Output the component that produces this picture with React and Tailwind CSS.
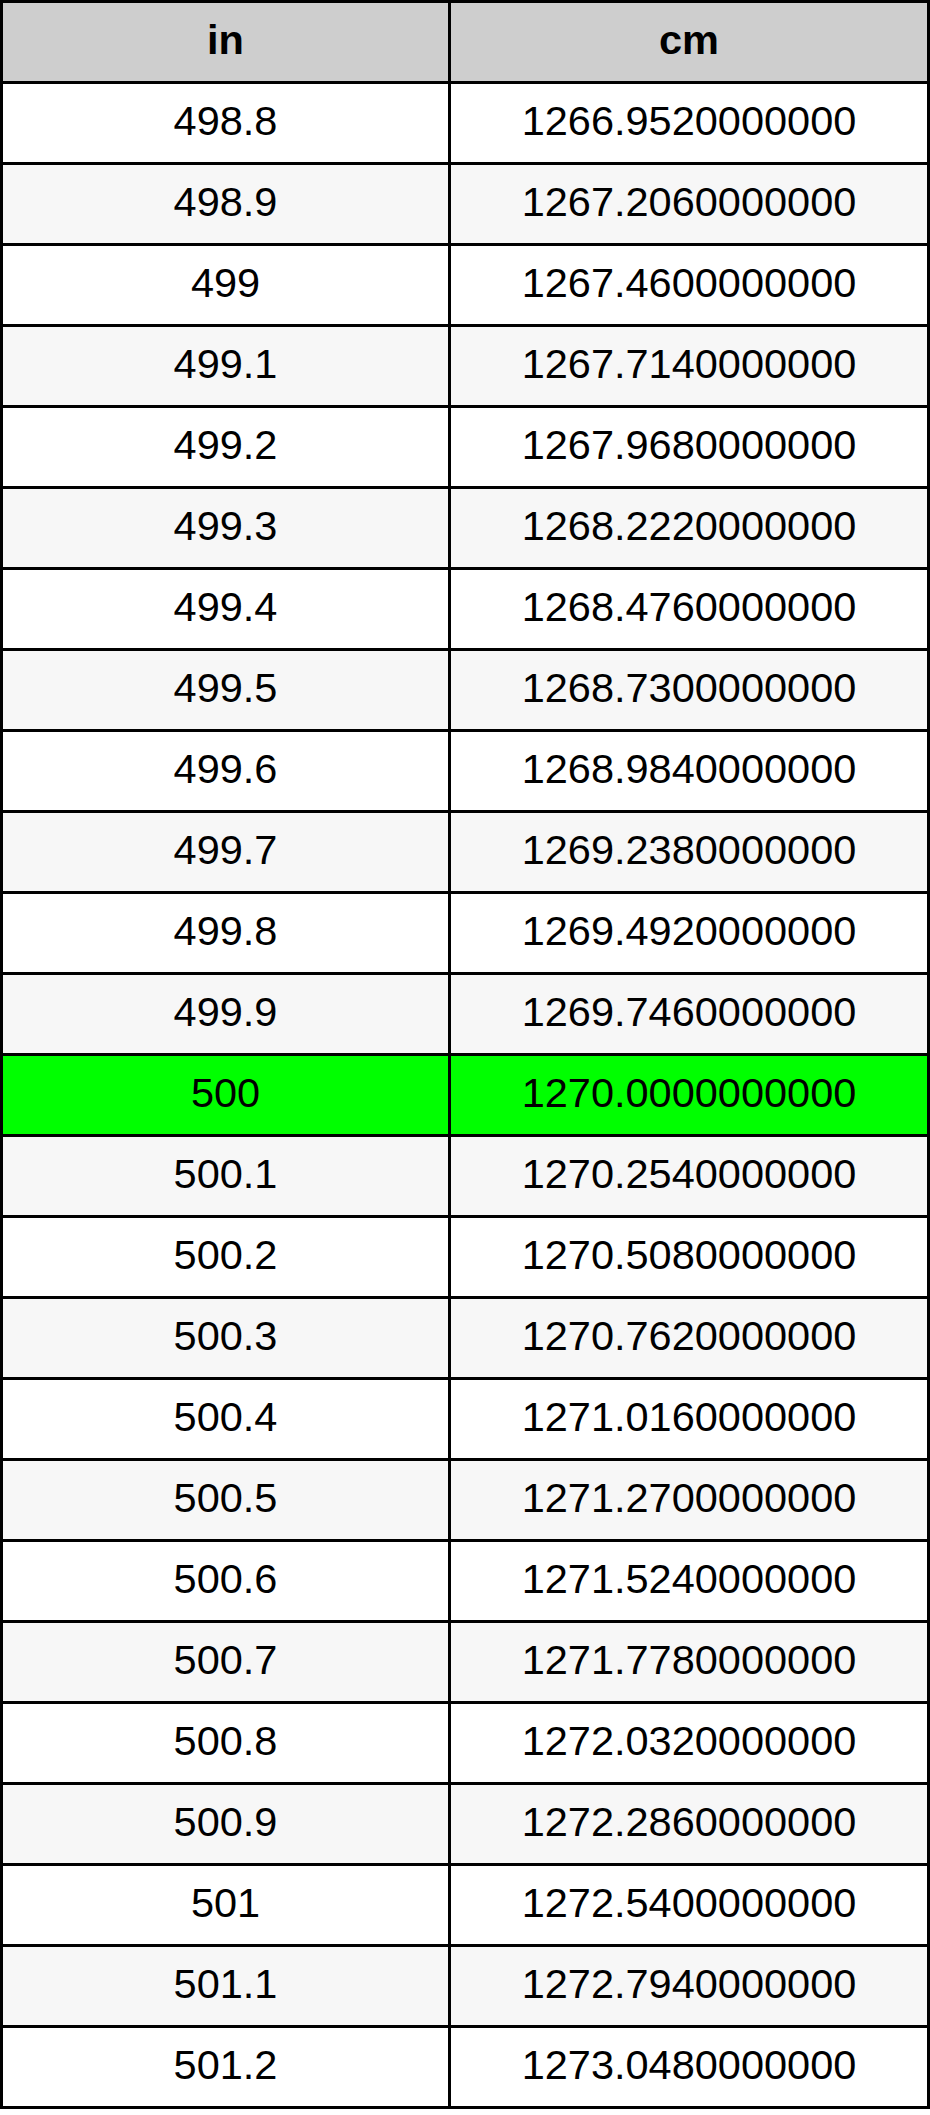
import React from "react";

const rows = [
  ["498.8", "1266.9520000000"],
  ["498.9", "1267.2060000000"],
  ["499", "1267.4600000000"],
  ["499.1", "1267.7140000000"],
  ["499.2", "1267.9680000000"],
  ["499.3", "1268.2220000000"],
  ["499.4", "1268.4760000000"],
  ["499.5", "1268.7300000000"],
  ["499.6", "1268.9840000000"],
  ["499.7", "1269.2380000000"],
  ["499.8", "1269.4920000000"],
  ["499.9", "1269.7460000000"],
  ["500", "1270.0000000000"],
  ["500.1", "1270.2540000000"],
  ["500.2", "1270.5080000000"],
  ["500.3", "1270.7620000000"],
  ["500.4", "1271.0160000000"],
  ["500.5", "1271.2700000000"],
  ["500.6", "1271.5240000000"],
  ["500.7", "1271.7780000000"],
  ["500.8", "1272.0320000000"],
  ["500.9", "1272.2860000000"],
  ["501", "1272.5400000000"],
  ["501.1", "1272.7940000000"],
  ["501.2", "1273.0480000000"],
];

export default function App() {
  return (
    <div
      className="w-[930px] min-h-[2115px] bg-white text-black"
      style={{ fontFamily: '"Liberation Sans", Arial, sans-serif' }}
    >
      <div className="w-[930px] border-l-[3px] border-t-[3px] border-black">
        <div className="flex h-[81px] border-b-[3px] border-black bg-[#cecece] font-bold text-[41.5px]">
          <div className="w-[448px] border-r-[3px] border-black flex items-center justify-center pb-[3px]">in</div>
          <div className="w-[479px] border-r-[3px] border-black flex items-center justify-center pb-[3px]">cm</div>
        </div>
        {rows.map(([a, b], i) => {
          const bg = a === "500" ? "bg-[#00ff00]" : i % 2 === 1 ? "bg-[#f7f7f7]" : "bg-white";
          return (
            <div key={a} className={`flex h-[81px] border-b-[3px] border-black text-[41.5px] ${bg}`}>
              <div className="w-[448px] border-r-[3px] border-black flex items-center justify-center pb-[3px]">{a}</div>
              <div className="w-[479px] border-r-[3px] border-black flex items-center justify-center pb-[3px]">{b}</div>
            </div>
          );
        })}
      </div>
    </div>
  );
}
